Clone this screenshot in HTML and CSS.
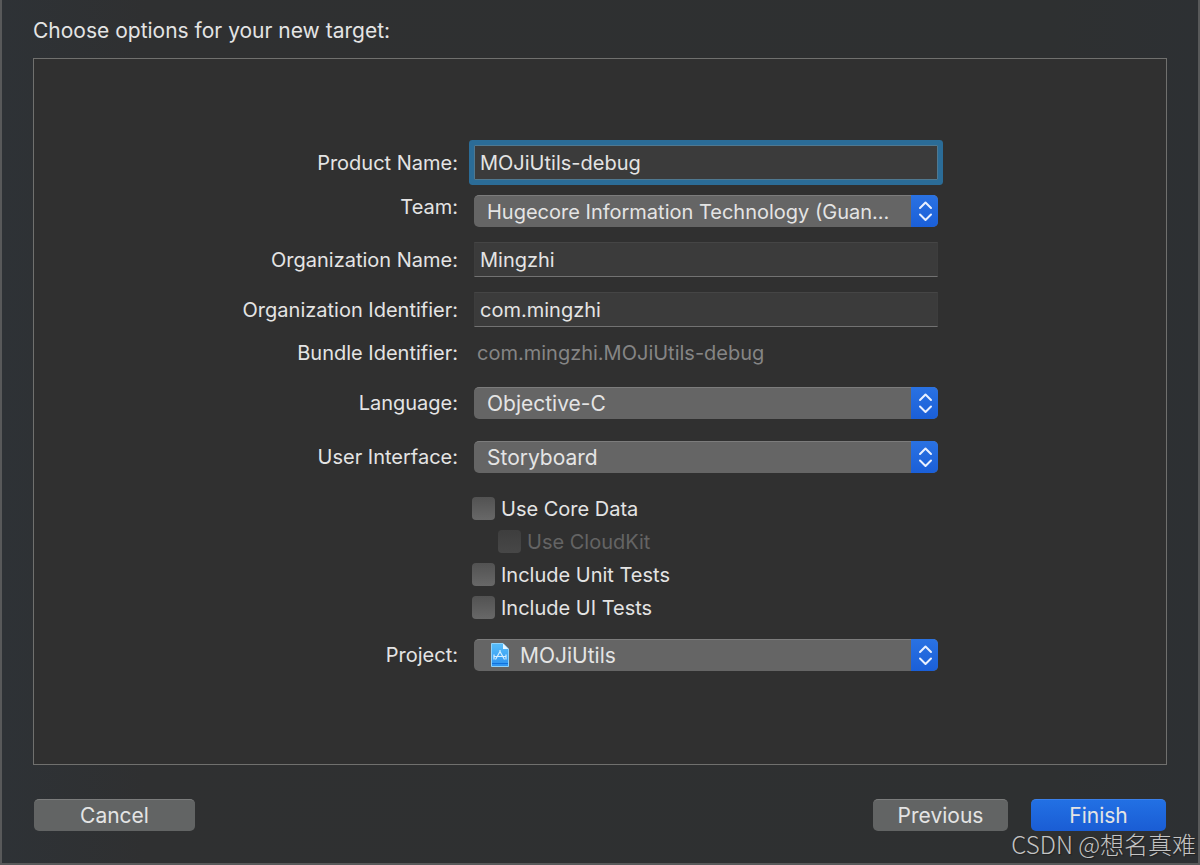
FILE: index.html
```html
<!DOCTYPE html>
<html lang="en">
<head>
    <meta charset="UTF-8">
    <meta name="viewport" content="width=device-width, initial-scale=1.0">
    <title>New Target</title>
    <link rel="stylesheet" href="styles.css">
</head>
<body>
    <form class="dialog">
        <h1>Choose options for your new target:</h1>

        <div class="panel">
            <div class="row">
                <label for="product-name">Product Name:</label>
                <input class="field focused" type="text" id="product-name" value="MOJiUtils-debug">
            </div>
            <div class="row row-team">
                <label for="team">Team:</label>
                <div class="popup popup-long">
                    <select id="team">
                        <option>Hugecore Information Technology (Guan...</option>
                    </select>
                    <svg class="arrows" viewBox="0 0 27 32"><path d="M9 13L14.500 7.500L20 13M9 19.500L14.500 25L20 19.500"/></svg>
                </div>
            </div>
            <div class="row">
                <label for="org-name">Organization Name:</label>
                <input class="field" type="text" id="org-name" value="Mingzhi">
            </div>
            <div class="row">
                <label for="org-id">Organization Identifier:</label>
                <input class="field" type="text" id="org-id" value="com.mingzhi">
            </div>
            <div class="row row-bundle">
                <label for="bundle-id">Bundle Identifier:</label>
                <output class="bundle" id="bundle-id">com.mingzhi.MOJiUtils-debug</output>
            </div>
            <div class="row row-spaced">
                <label for="language">Language:</label>
                <div class="popup">
                    <select id="language">
                        <option>Objective-C</option>
                        <option>Swift</option>
                    </select>
                    <svg class="arrows" viewBox="0 0 27 32"><path d="M9 13L14.500 7.500L20 13M9 19.500L14.500 25L20 19.500"/></svg>
                </div>
            </div>
            <div class="row row-spaced">
                <label for="interface">User Interface:</label>
                <div class="popup">
                    <select id="interface">
                        <option>Storyboard</option>
                        <option>SwiftUI</option>
                    </select>
                    <svg class="arrows" viewBox="0 0 27 32"><path d="M9 13L14.500 7.500L20 13M9 19.500L14.500 25L20 19.500"/></svg>
                </div>
            </div>

            <div class="row row-checks">
                <div class="checks">
                    <label class="check"><input type="checkbox">Use Core Data</label>
                    <label class="check check-nested"><input type="checkbox" disabled>Use CloudKit</label>
                    <label class="check"><input type="checkbox">Include Unit Tests</label>
                    <label class="check"><input type="checkbox">Include UI Tests</label>
                </div>
            </div>

            <div class="row">
                <label for="project">Project:</label>
                <div class="popup popup-icon">
                    <select id="project">
                        <option>MOJiUtils</option>
                    </select>
                    <svg class="file-icon" viewBox="0 0 18 24">
                        <defs>
                            <linearGradient id="paper" x1="0" y1="0" x2="0" y2="1">
                                <stop offset="0" stop-color="#58bdf8"/>
                                <stop offset="1" stop-color="#2d93f2"/>
                            </linearGradient>
                        </defs>
                        <path d="M0.500 0.500H12L17.500 6V23.500H0.500Z" fill="url(#paper)" stroke="#8fd2fb"/>
                        <path d="M12 0.500V6H17.500Z" fill="#e6f5ff"/>
                        <path d="M9.600 7.500L4.500 16.500M8.400 7.500L13.500 16.500M2.500 13.500H15.500M3 11.500V16.500M15 11.500V16.500" fill="none" stroke="#d4eeff" stroke-width="1.200"/>
                        <path d="M1 20.500H17" stroke="#1272dc"/>
                    </svg>
                    <svg class="arrows" viewBox="0 0 27 32"><path d="M9 13L14.500 7.500L20 13M9 19.500L14.500 25L20 19.500"/></svg>
                </div>
            </div>
        </div>

        <div class="buttons">
            <button class="cancel" type="button">Cancel</button>
            <button type="button">Previous</button>
            <button class="primary" type="submit">Finish</button>
        </div>
        <span class="watermark">CSDN @想名真难</span>
    </form>
</body>
</html>
```
FILE: styles.css
```css
* {
    box-sizing: border-box;
}
body {
    margin: 0;
    font-family: Inter, "Noto Sans CJK SC", sans-serif;
    font-size: 20px;
    line-height: 24px;
    color: #e4e4e4;
    background-color: #2e3031;
}
.dialog {
    position: relative;
    display: flex;
    flex-direction: column;
    min-height: 100vh;
    padding: 18px 31px 32px;
    border: 2px solid #58595a;
    border-top: none;
    background: linear-gradient(to right, #2e3236, #2f3031 12%, #2e3031 88%, #2d3033);
}
h1 {
    margin: 0 0 15px;
    font-size: 21px;
    font-weight: 400;
    line-height: 25px;
}
.panel {
    flex: 1;
    padding: 71px 0;
    border: 1px solid #70706e;
    background-color: #303030;
}
.row {
    display: grid;
    grid-template-columns: 2fr 464px 1fr;
    column-gap: 16px;
    align-items: center;
    margin-top: 15px;
}
.row > label {
    text-align: right;
}
.row-team {
    align-items: start;
}
.row-bundle {
    margin-top: 14px;
}
.row-spaced {
    margin-top: 22px;
}
.row-checks {
    margin-top: 19px;
}
input, select, button {
    font: inherit;
    color: inherit;
}
.field {
    width: 100%;
    height: 35px;
    padding: 0 5px;
    border: 1px solid #3d3d3d;
    border-top-color: #454545;
    border-bottom-color: #727272;
    outline: none;
    background-color: #3b3b3b;
}
.focused {
    border-color: #4f7890;
    border-radius: 1px;
    box-shadow: 0 0 0 5px #2b6c97;
}
.bundle {
    padding-left: 3px;
    color: #858585;
}

/* Pop-up menus */
.popup {
    position: relative;
}
.popup select {
    display: block;
    width: 100%;
    height: 32px;
    padding: 0 28px 0 13px;
    border: none;
    border-top: 1px solid #7c7c7c;
    border-radius: 5px;
    background-color: #656565;
    font-size: 21px;
    appearance: none;
}
.popup-long select {
    font-size: 20px;
}
.popup-icon select {
    padding-left: 46px;
}
.arrows {
    position: absolute;
    top: 0;
    right: 0;
    width: 27px;
    height: 32px;
    border-radius: 0 5px 5px 0;
    background: linear-gradient(#2a72e2, #1a5fd8);
    pointer-events: none;
}
.arrows path {
    fill: none;
    stroke: #e8f0ff;
    stroke-width: 2;
    stroke-linecap: round;
    stroke-linejoin: round;
}
.file-icon {
    position: absolute;
    top: 4px;
    left: 17px;
    width: 18px;
    height: 24px;
    pointer-events: none;
}

/* Checkboxes */
.checks {
    grid-column: 2;
}
.check {
    display: flex;
    align-items: center;
    gap: 6px;
    height: 33px;
    margin-left: -2px;
}
.check-nested {
    margin-left: 24px;
    color: #646464;
}
.check input {
    width: 23px;
    height: 23px;
    margin: 0;
    border-radius: 4px;
    background: linear-gradient(#525252, #686868);
    appearance: none;
}
.check input:disabled {
    background: linear-gradient(#3e3e3e, #474747);
}

.buttons {
    display: flex;
    gap: 23px;
    margin-top: 34px;
    padding: 0 1px;
}
button {
    width: 135px;
    height: 32px;
    padding: 0;
    border: none;
    border-top: 1px solid #7b7c7c;
    border-radius: 5px;
    background-color: #626464;
    font-size: 21px;
}
.cancel {
    width: 161px;
    margin-right: auto;
}
.primary {
    border-top-color: #3b80ea;
    background: linear-gradient(#2270e4, #1a5dd4);
}
.watermark {
    position: absolute;
    right: 2px;
    bottom: 4px;
    font-family: "Noto Sans CJK SC", sans-serif;
    font-size: 24px;
    font-weight: 300;
    line-height: 30px;
    color: #c4c4c4;
    text-shadow: 1px 1px 1px #222;
}
```
